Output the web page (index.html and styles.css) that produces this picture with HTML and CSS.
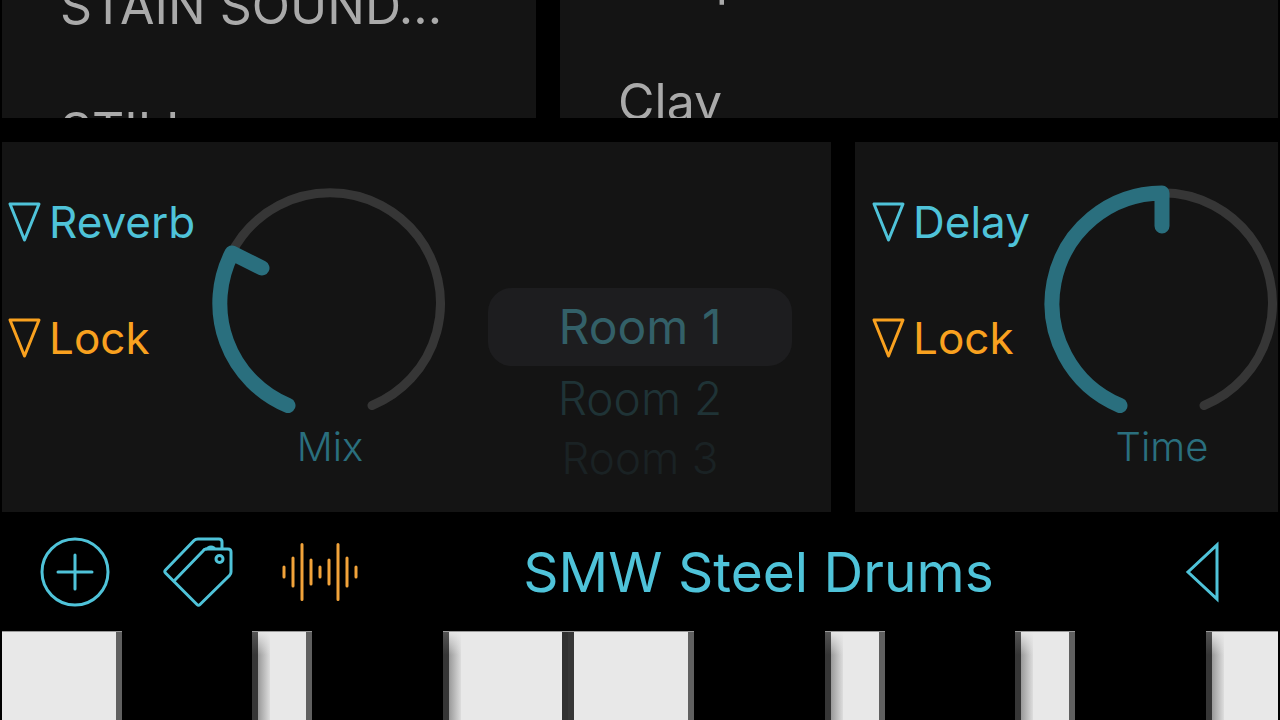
FILE: index.html
```html
<!DOCTYPE html>
<html lang="en">
<head>
    <meta charset="UTF-8">
    <meta name="viewport" content="width=device-width, initial-scale=1">
    <title>SMW Steel Drums</title>
    <link rel="stylesheet" href="styles.css">
</head>
<body>

<main class="browser">
    <section class="panel">
        <ul class="list list-banks">
            <li>STAIN SOUND...</li>
            <li>STILL</li>
        </ul>
    </section>
    <section class="panel">
        <ul class="list list-types">
            <li>Chirp</li>
            <li>Clay</li>
        </ul>
    </section>
</main>

<div class="effects">
    <section class="panel effect reverb">
        <div class="switches">
            <button class="switch">
                <svg width="34" height="40" viewBox="0 0 34 40"><path d="M2 2H31L16.500 38Z"/></svg>
                Reverb
            </button>
            <button class="switch lock">
                <svg width="34" height="40" viewBox="0 0 34 40"><path d="M2 2H31L16.500 38Z"/></svg>
                Lock
            </button>
        </div>
        <div class="knob">
            <svg width="240" height="240" viewBox="0 0 240 240">
                <path class="track" d="M78 221.500A110.500 110.500 0 1 1 162 221.500"/>
                <path class="value" d="M78 221.500A110.500 110.500 0 0 1 22 69L52 84"/>
            </svg>
            <input type="range" id="mix" min="0" max="100" value="30">
            <label for="mix">Mix</label>
        </div>
        <div class="picker" role="radiogroup" aria-label="Reverb type">
            <label class="option selected"><input type="radio" name="room" checked>Room 1</label>
            <label class="option near"><input type="radio" name="room">Room 2</label>
            <label class="option far"><input type="radio" name="room">Room 3</label>
        </div>
    </section>

    <section class="panel effect delay">
        <div class="switches">
            <button class="switch">
                <svg width="34" height="40" viewBox="0 0 34 40"><path d="M2 2H31L16.500 38Z"/></svg>
                Delay
            </button>
            <button class="switch lock">
                <svg width="34" height="40" viewBox="0 0 34 40"><path d="M2 2H31L16.500 38Z"/></svg>
                Lock
            </button>
        </div>
        <div class="knob">
            <svg width="240" height="240" viewBox="0 0 240 240">
                <path class="track" d="M78 221.500A110.500 110.500 0 1 1 162 221.500"/>
                <path class="value" d="M78 221.500A110.500 110.500 0 0 1 120 9V42"/>
            </svg>
            <input type="range" id="time" min="0" max="100" value="50">
            <label for="time">Time</label>
        </div>
    </section>
</div>

<nav class="toolbar">
    <button class="tool" aria-label="Add">
        <svg width="70" height="70" viewBox="0 0 70 70">
            <circle cx="35" cy="35" r="33"/>
            <path d="M35 18V52M18 35H52"/>
        </svg>
    </button>
    <button class="tool" aria-label="Tags">
        <svg width="70" height="70" viewBox="0 0 70 70">
            <path d="M43 12H65Q68 12 68 15V35Q68 37 66.500 38.500L37 67.500Q35.500 69 34 67.500L2.500 36Q1 34.500 2.500 33L31 3.500Q32.500 2 35 2H56Q59 2 59 5V11"/>
            <path d="M11 44L40 14Q41 12 43 12M45 11Q48 9 51 11"/>
            <circle cx="56.500" cy="22" r="3.500"/>
        </svg>
    </button>
    <button class="tool wave" aria-label="Sounds">
        <svg width="78" height="70" viewBox="0 0 78 70">
            <path d="M3 30V40M12 21V49M21 7.500V62.500M30 23V47M39 30V40M48 23V47M57 7.500V62.500M66 21V49M75 30V40"/>
        </svg>
    </button>
    <h1 class="preset">SMW Steel Drums</h1>
    <button class="tool" aria-label="Previous preset">
        <svg width="36" height="64" viewBox="0 0 36 64"><path class="sharp" d="M33 5V59L4 32Z"/></svg>
    </button>
</nav>

<div class="keyboard">
    <button class="key first" style="flex-grow: 120" aria-label="Key 1"></button>
    <button class="key black" style="flex-grow: 130" aria-label="Key 2"></button>
    <button class="key" style="flex-grow: 60" aria-label="Key 3"></button>
    <button class="key black" style="flex-grow: 131" aria-label="Key 4"></button>
    <button class="key joined" style="flex-grow: 125" aria-label="Key 5"></button>
    <button class="key after" style="flex-grow: 126" aria-label="Key 6"></button>
    <button class="key black" style="flex-grow: 131" aria-label="Key 7"></button>
    <button class="key" style="flex-grow: 60" aria-label="Key 8"></button>
    <button class="key black" style="flex-grow: 130" aria-label="Key 9"></button>
    <button class="key" style="flex-grow: 60" aria-label="Key 10"></button>
    <button class="key black" style="flex-grow: 131" aria-label="Key 11"></button>
    <button class="key last" style="flex-grow: 72" aria-label="Key 12"></button>
</div>

</body>
</html>
```

FILE: styles.css
```css
* {
    box-sizing: border-box;
}
body {
    display: flex;
    flex-direction: column;
    height: 100vh;
    margin: 0;
    padding: 0 2px;
    overflow: hidden;
    background-color: #000;
    color: #4fc3d9;
    font-family: Inter, "Liberation Sans", sans-serif;
    font-weight: 400;
}
button {
    padding: 0;
    border: none;
    background: none;
    color: inherit;
    font: inherit;
    cursor: pointer;
}
svg {
    display: block;
    flex: none;
    fill: none;
    stroke: currentColor;
    stroke-width: 3px;
    stroke-linecap: round;
    stroke-linejoin: round;
}
.panel {
    background-color: #141414;
    overflow: hidden;
}

/* lists */
.browser {
    display: grid;
    grid-template-columns: 534fr 718fr;
    gap: 24px;
    height: 118px;
}
.list {
    margin: 0;
    padding: 0 58px;
    list-style: none;
    color: #aaa;
    font-size: 50px;
    line-height: 125px;
    white-space: nowrap;
}
.list-banks {
    margin-top: -56px;
}
.list-types {
    margin-top: -85px;
}

/* effects */
.effects {
    display: grid;
    grid-template-columns: 829fr 423fr;
    gap: 24px;
    height: 370px;
    margin-top: 24px;
}
.effect {
    display: flex;
    align-items: flex-start;
}
.reverb {
    padding-left: 6px;
}
.delay {
    padding-left: 17px;
}
.switches {
    display: flex;
    flex: none;
    flex-direction: column;
    gap: 60px;
    width: 202px;
    padding-top: 52px;
}
.delay .switches {
    width: 170px;
}
.switch {
    display: flex;
    align-items: center;
    gap: 7px;
    height: 56px;
    font-size: 44px;
}
.lock {
    color: #f9a11f;
}
.knob {
    position: relative;
    display: flex;
    flex: none;
    flex-direction: column;
    align-items: center;
    width: 240px;
    padding-top: 42px;
    color: #2a6f7e;
    font-size: 40px;
    font-weight: 300;
    line-height: 46px;
}
.knob input {
    position: absolute;
    top: 42px;
    left: 0;
    width: 240px;
    height: 240px;
    margin: 0;
    opacity: 0;
}
.track {
    stroke: #363636;
    stroke-width: 9px;
}
.value {
    stroke-width: 15px;
}
.picker {
    width: 304px;
    margin: 146px 0 0 38px;
    text-align: center;
}
.option {
    display: block;
    color: #336068;
}
.option input {
    position: absolute;
    opacity: 0;
}
.selected {
    border-radius: 24px;
    background-color: #1d1d1f;
    font-size: 48px;
    line-height: 78px;
}
.near {
    color: #1f3336;
    font-size: 46px;
    font-weight: 300;
    line-height: 65px;
}
.far {
    color: #1a2224;
    font-size: 44px;
    font-weight: 300;
    line-height: 54px;
}

/* toolbar */
.toolbar {
    display: flex;
    align-items: center;
    height: 119px;
    padding: 1px 58px 0 38px;
}
.tool {
    margin-right: 53px;
}
.wave {
    margin: 0 0 0 -5px;
    color: #f2a33a;
}
.preset {
    flex: 1;
    margin: 0;
    padding-right: 26px;
    font-size: 55px;
    font-weight: 400;
    text-align: center;
    white-space: nowrap;
}
.preset + .tool {
    margin: 0;
}
.sharp {
    stroke-linejoin: miter;
}

/* keyboard */
.keyboard {
    display: flex;
    flex: 1;
}
.key {
    flex: 1 1 0;
    min-width: 0;
    box-shadow: inset 0 1px #999, inset -6px 0 #606060;
    background:
        linear-gradient(#555, transparent 24px) 0 0 / 6px 24px no-repeat,
        linear-gradient(#e8e8e8, transparent 24px) 6px 0 / 12px 24px no-repeat,
        linear-gradient(to right, #363636 6px, #999 6px, #ddd 18px, #e8e8e8 18px);
}
.black {
    box-shadow: none;
    background: #000;
}
.first {
    background: #e8e8e8;
}
.joined {
    box-shadow: inset 0 1px #999, inset -6px 0 #303030;
}
.after {
    background: linear-gradient(to right, #363636 6px, #e8e8e8 6px);
}
.last {
    box-shadow: inset 0 1px #999;
}
```
